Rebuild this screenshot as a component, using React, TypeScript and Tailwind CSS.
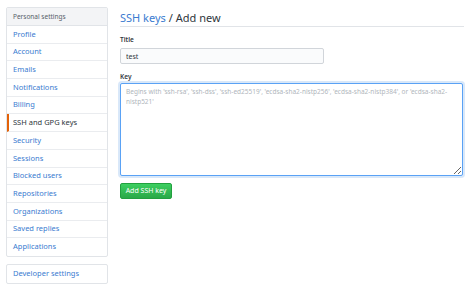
import { useState } from 'react';

const items = [
  'Profile',
  'Account',
  'Emails',
  'Notifications',
  'Billing',
  'SSH and GPG keys',
  'Security',
  'Sessions',
  'Blocked users',
  'Repositories',
  'Organizations',
  'Saved replies',
  'Applications',
];

export default function App() {
  const [title, setTitle] = useState('test');
  const [key, setKey] = useState('');

  return (
    <div
      className="flex h-[285px] w-[474px] gap-[12px] bg-white pl-[6px] pt-[7px] text-[#2f363d]"
      style={{ fontFamily: '"Noto Sans", "Open Sans", sans-serif' }}
    >
      <div className="w-[102px] shrink-0">
        <nav className="rounded-[2px] border border-[#e1e4e8] text-[7.5px]">
          <div className="flex h-[18px] items-center border-b border-[#e1e4e8] bg-[#f3f4f6] px-[6px] text-[6.5px] text-[#586069]">
            Personal settings
          </div>
          {items.map((item, i) => {
            const selected = item === 'SSH and GPG keys';
            return (
              <div
                key={item}
                className={`flex h-[17.7px] items-center px-[6px] ${
                  i < items.length - 1 ? 'border-b border-[#eaecef]' : ''
                } ${
                  selected
                    ? 'border-l-2 border-l-[#e36209] pl-[4px] text-[#2f363d]'
                    : 'text-[#3a7bd0]'
                }`}
              >
                {item}
              </div>
            );
          })}
        </nav>
        <div className="mt-[7px] flex h-[20px] items-center rounded-[2px] border border-[#e1e4e8] px-[6px] text-[7.5px] text-[#3a7bd0]">
          Developer settings
        </div>
      </div>

      <div className="w-[344px] pt-[3px]">
        <div className="flex h-[17px] items-center border-b border-[#e1e4e8] pb-[2px] text-[11px] leading-none">
          <span className="text-[#3a7bd0]">SSH keys</span>
          <span className="ml-[3px]">/ Add new</span>
        </div>
        <div className="mt-[8px] text-[6.5px] font-semibold leading-[10px]">Title</div>
        <input
          value={title}
          onChange={(e) => setTitle(e.target.value)}
          className="mt-[3px] block h-[16px] w-[204px] rounded-[2px] border border-[#d1d5da] bg-[#fafbfc] px-[5px] text-[7px] outline-none"
        />
        <div className="mt-[8px] text-[6.5px] font-semibold leading-[10px]">Key</div>
        <textarea
          value={key}
          onChange={(e) => setKey(e.target.value)}
          placeholder="Begins with 'ssh-rsa', 'ssh-dss', 'ssh-ed25519', 'ecdsa-sha2-nistp256', 'ecdsa-sha2-nistp384', or 'ecdsa-sha2-nistp521'"
          className="mt-[1px] block h-[93px] w-[343px] resize-y rounded-[2px] border border-[#5aa2f5] bg-white px-[5px] py-[3px] text-[6.5px] leading-[10px] shadow-[0_0_0_2px_rgba(3,102,214,0.15)] outline-none placeholder:text-[#b0b6bc]"
        />
        <button className="mt-[7px] flex h-[16px] w-[52px] items-center justify-center rounded-[2px] border border-[#22a03f] bg-gradient-to-b from-[#3ccf60] to-[#2aa848] text-[7px] text-white">
          Add SSH key
        </button>
      </div>
    </div>
  );
}
